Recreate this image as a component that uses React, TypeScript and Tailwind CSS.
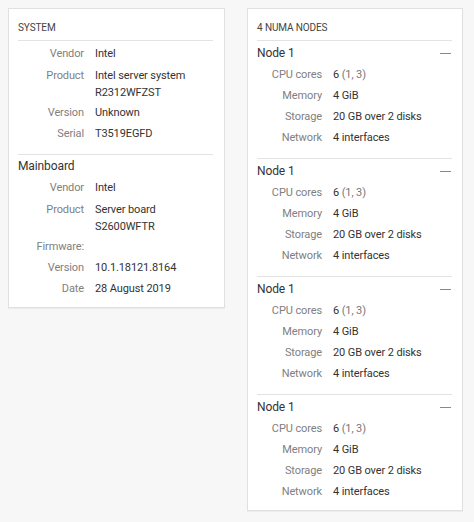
import React from "react";

type Row = { label: string; value: React.ReactNode; tall?: boolean };

const systemRows: Row[] = [
  { label: "Vendor", value: "Intel" },
  { label: "Product", value: "Intel server system R2312WFZST", tall: true },
  { label: "Version", value: "Unknown" },
  { label: "Serial", value: "T3519EGFD" },
];

const boardRows: Row[] = [
  { label: "Vendor", value: "Intel" },
  { label: "Product", value: "Server board S2600WFTR", tall: true },
  { label: "Firmware:", value: "" },
  { label: "Version", value: "10.1.18121.8164" },
  { label: "Date", value: "28 August 2019" },
];

const nodeRows: Row[] = [
  {
    label: "CPU cores",
    value: (
      <>
        6 <span className="text-[#777]">(1, 3)</span>
      </>
    ),
  },
  { label: "Memory", value: "4 GiB" },
  { label: "Storage", value: "20 GB over 2 disks" },
  { label: "Network", value: "4 interfaces" },
];

function InfoRow({ row, labelW }: { row: Row; labelW: string }) {
  return (
    <div className={`flex ${row.tall ? "py-[2px] leading-[17px]" : "h-[21px] items-center"}`}>
      <div className={`${labelW} shrink-0 text-right text-[#808080]`}>{row.label}</div>
      <div className="ml-[11px] w-[100px] text-[#333]">{row.value}</div>
    </div>
  );
}

function Card({ title, children, className }: { title: string; children: React.ReactNode; className?: string }) {
  return (
    <div className={`border border-[#e0e0e0] bg-white shadow-[0_1px_1px_rgba(0,0,0,0.04)] ${className ?? ""}`}>
      <div className="pt-[12px]">
        <div className="h-[14px] text-[10px] leading-[14px] text-[#444]">{title}</div>
        <div className="mt-[5px] border-b border-[#e3e3e3]" />
      </div>
      {children}
    </div>
  );
}

function NodeBlock({ first, last }: { first?: boolean; last?: boolean }) {
  return (
    <div className={`${first ? "" : "border-t border-[#e3e3e3]"} ${last ? "pb-[7px]" : "pb-[9px]"}`}>
      <div className="mt-[4px] flex h-[16px] items-center justify-between text-[12px] text-[#333]">
        <span>Node 1</span>
        <span className="mr-px block h-px w-[11px] bg-[#888]" />
      </div>
      <div className="mt-[4px]">
        {nodeRows.map((r) => (
          <InfoRow key={r.label} row={r} labelW="w-[65px]" />
        ))}
      </div>
    </div>
  );
}

export default function App() {
  return (
    <div
      className="min-h-[522px] bg-[#f7f7f7] pl-[8px] pt-[8px] text-[11px] tracking-[-0.01em]"
      style={{ fontFamily: 'Roboto, "Noto Sans", sans-serif' }}
    >
      <div className="flex items-start gap-[22px]">
        <Card title="SYSTEM" className="w-[217px] pl-[9px] pr-[11px] pb-[7px]">
          <div className="pt-[3px]">
            {systemRows.map((r) => (
              <InfoRow key={r.label} row={r} labelW="w-[66px]" />
            ))}
          </div>
          <div className="mt-[9px] border-t border-[#e3e3e3]">
            <div className="mt-[3px] h-[16px] text-[12px] leading-[16px] text-[#333]">Mainboard</div>
            <div className="mt-[4px]">
              {boardRows.map((r) => (
                <InfoRow key={r.label} row={r} labelW="w-[66px]" />
              ))}
            </div>
          </div>
        </Card>
        <Card title="4 NUMA NODES" className="w-[216px] pl-[9px] pr-[10px]">
          <NodeBlock first />
          <NodeBlock />
          <NodeBlock />
          <NodeBlock last />
        </Card>
      </div>
    </div>
  );
}
